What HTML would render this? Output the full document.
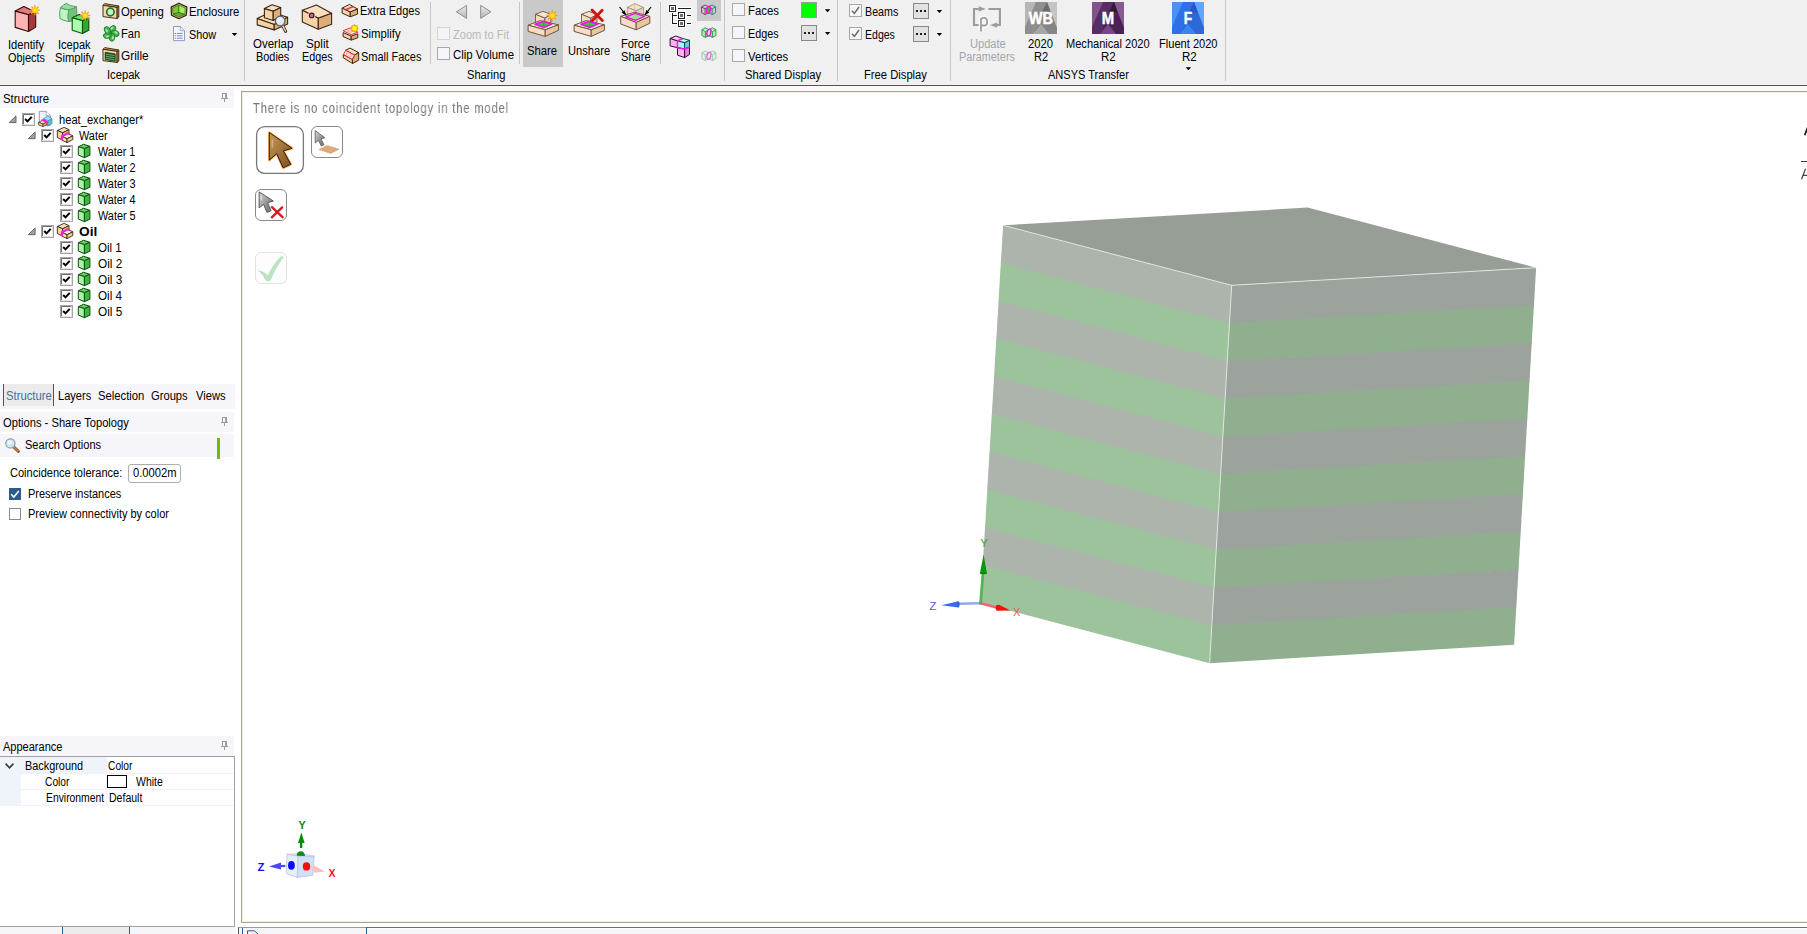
<!DOCTYPE html>
<html><head><meta charset="utf-8"><title>heat_exchanger - SpaceClaim</title>
<style>
html,body{margin:0;padding:0;}
body{width:1807px;height:934px;overflow:hidden;position:relative;background:#fff;
 font-family:"Liberation Sans",sans-serif;font-size:12px;line-height:14px;color:#000;}
.t{position:absolute;white-space:nowrap;transform-origin:0 0;line-height:14px;}
.b{position:absolute;}
svg{position:absolute;left:0;top:0;overflow:visible;}
</style></head><body>
<!-- ===== ribbon background ===== -->
<div class="b" style="left:0;top:0;width:1807px;height:84px;background:#f0f0f0"></div>
<div class="b" style="left:0;top:84px;width:1807px;height:1px;background:#f6f1ea"></div>
<div class="b" style="left:0;top:85px;width:1807px;height:1px;background:#2b5c8c"></div>
<div class="b" style="left:0;top:86px;width:1807px;height:5px;background:#fbfbfd"></div>
<!-- share highlight -->
<div class="b" style="left:523px;top:0;width:40px;height:67px;background:#c9c9c9"></div>
<div class="b" style="left:697px;top:0;width:24px;height:21px;background:#c9c9c9"></div>
<!-- group separators -->
<div class="b" style="left:244px;top:0;width:1px;height:81px;background:#c6c6c6"></div>
<div class="b" style="left:430px;top:2px;width:1px;height:62px;background:#c6c6c6"></div>
<div class="b" style="left:519px;top:2px;width:1px;height:62px;background:#c6c6c6"></div>
<div class="b" style="left:660px;top:2px;width:1px;height:62px;background:#c6c6c6"></div>
<div class="b" style="left:724px;top:0;width:1px;height:81px;background:#c6c6c6"></div>
<div class="b" style="left:837px;top:0;width:1px;height:81px;background:#c6c6c6"></div>
<div class="b" style="left:950px;top:0;width:1px;height:81px;background:#c6c6c6"></div>
<div class="b" style="left:1225px;top:0;width:1px;height:81px;background:#c6c6c6"></div>
<!-- ===== left panels ===== -->
<div class="b" style="left:0;top:88px;width:234px;height:20px;background:#f5f5fa"></div>
<div class="b" style="left:0;top:384px;width:235px;height:25px;background:#f5f5fa"></div>
<div class="b" style="left:3px;top:384px;width:51px;height:22px;background:#ebebeb;border-left:1px solid #2b5c8c;border-right:1px solid #2b5c8c;box-sizing:border-box"></div>
<div class="b" style="left:0;top:412px;width:234px;height:20px;background:#f5f5fa"></div>
<div class="b" style="left:0;top:434px;width:234px;height:23px;background:#f5f5fa"></div>
<div class="b" style="left:217px;top:438px;width:3px;height:21px;background:#76b900"></div>
<div class="b" style="left:128px;top:464px;width:53px;height:19px;background:#fff;border:1px solid #adadad;border-radius:3px;box-sizing:border-box"></div>
<div class="b" style="left:9px;top:488px;width:12px;height:12px;background:#2b5c8c"></div>
<div class="b" style="left:9px;top:508px;width:12px;height:12px;background:#fff;border:1px solid #8c8c8c;box-sizing:border-box"></div>
<div class="b" style="left:0;top:736px;width:234px;height:20px;background:#f5f5fa"></div>
<!-- appearance grid -->
<div class="b" style="left:0;top:756px;width:235px;height:171px;border-top:1px solid #a0a0a0;border-right:1px solid #a0a0a0;border-bottom:1px solid #a0a0a0;box-sizing:border-box;background:#fff"></div>
<div class="b" style="left:0;top:757px;width:106px;height:16px;background:#eff3fa"></div>
<div class="b" style="left:0;top:773px;width:21px;height:32px;background:#eff3fa"></div>
<div class="b" style="left:21px;top:773px;width:213px;height:1px;background:#eef1f7"></div>
<div class="b" style="left:21px;top:789px;width:213px;height:1px;background:#eef1f7"></div>
<div class="b" style="left:0px;top:805px;width:234px;height:1px;background:#eef1f7"></div>
<div class="b" style="left:106px;top:757px;width:1px;height:48px;background:#eef1f7"></div>
<div class="b" style="left:107px;top:775px;width:20px;height:13px;border:1px solid #000;box-sizing:border-box;background:#fff"></div>
<!-- bottom strip left -->
<div class="b" style="left:0;top:927px;width:236px;height:7px;background:#f5f5fa"></div>
<div class="b" style="left:62px;top:927px;width:68px;height:7px;background:#ebebeb;border-left:1px solid #2b5c8c;border-right:1px solid #2b5c8c;box-sizing:border-box"></div>
<!-- ===== viewport frame ===== -->
<div class="b" style="left:241px;top:91px;width:1600px;height:832px;border:1px solid #a9a592;box-sizing:border-box;background:#fff"></div>
<div class="b" style="left:242px;top:92px;width:1600px;height:830px;border:1px solid #f4efd9;box-sizing:border-box;"></div>
<!-- bottom strip right -->
<div class="b" style="left:238px;top:927px;width:1569px;height:7px;background:#f5f5fa;border-top:1px solid #9c9c9c;border-left:1px solid #505050;box-sizing:border-box"></div>
<div class="b" style="left:367px;top:927px;width:1440px;height:1px;background:#707070"></div>
<div class="b" style="left:367px;top:928px;width:1440px;height:1px;background:#fdfdfe"></div>
<div class="b" style="left:242px;top:928px;width:1px;height:6px;background:#2b5c8c"></div>
<div class="b" style="left:366px;top:927px;width:1px;height:7px;background:#2b5c8c"></div>

<svg width="1807" height="86" viewBox="0 0 1807 86">
<polygon points="15.2,11.1 23.8,6.6 35.7,11.9 28.5,14.7" fill="#e27a7a" stroke="#3a0a0a" stroke-width="1.1" stroke-linejoin="round"/>
<polygon points="15.2,11.1 28.5,14.7 28.5,31.5 15.2,27.4" fill="#ffb4b4" stroke="#3a0a0a" stroke-width="1.1" stroke-linejoin="round"/>
<polygon points="28.5,14.7 35.7,11.9 35.7,27.1 28.5,31.5" fill="#a63a3a" stroke="#3a0a0a" stroke-width="1.1" stroke-linejoin="round"/>
<line x1="30.4" y1="10.2" x2="39.6" y2="10.2" stroke="#f39a2c" stroke-width="1.3" stroke-linecap="round"/>
<line x1="31.7" y1="6.9" x2="38.3" y2="13.5" stroke="#f39a2c" stroke-width="1.3" stroke-linecap="round"/>
<line x1="35.0" y1="5.6" x2="35.0" y2="14.8" stroke="#f39a2c" stroke-width="1.3" stroke-linecap="round"/>
<line x1="38.3" y1="6.9" x2="31.7" y2="13.5" stroke="#f39a2c" stroke-width="1.3" stroke-linecap="round"/>
<circle cx="35.0" cy="10.2" r="2.9" fill="#ffc21a"/>
<circle cx="35.0" cy="10.2" r="1.8" fill="#ffe800"/>
<path d="M60.5,7.6 Q59,13 60,18.6 Q64,20.8 68.6,21.6 Q67.4,15 68.8,9.8 Q64,9.4 60.5,7.6Z" fill="#bdf5c0" stroke="#5c9c6c" stroke-width="1"/>
<path d="M68.8,9.8 Q73,8.8 76.4,6.8 Q77.4,13 76.4,19.4 Q72.5,21 68.6,21.6 Q67.4,15 68.8,9.8Z" fill="#72c47c" stroke="#5c9c6c" stroke-width="1"/>
<path d="M60.5,7.6 Q63.4,4.6 66.6,3.4 Q69,6 76.4,6.8 Q73,8.8 68.8,9.8 Q64,9.4 60.5,7.6Z" fill="#8fe29a" stroke="#5c9c6c" stroke-width="1"/>
<polygon points="72.2,17.7 79.1,14.4 88.8,18.3 82.5,20.8" fill="#66e066" stroke="#0c500c" stroke-width="1.1" stroke-linejoin="round"/>
<polygon points="72.2,17.7 82.5,20.8 82.5,33.5 72.2,30.2" fill="#aaffaa" stroke="#0c500c" stroke-width="1.1" stroke-linejoin="round"/>
<polygon points="82.5,20.8 88.8,18.3 88.8,30.2 82.5,33.5" fill="#34a834" stroke="#0c500c" stroke-width="1.1" stroke-linejoin="round"/>
<line x1="80.6" y1="15.5" x2="89.8" y2="15.5" stroke="#f39a2c" stroke-width="1.3" stroke-linecap="round"/>
<line x1="81.9" y1="12.2" x2="88.5" y2="18.8" stroke="#f39a2c" stroke-width="1.3" stroke-linecap="round"/>
<line x1="85.2" y1="10.9" x2="85.2" y2="20.1" stroke="#f39a2c" stroke-width="1.3" stroke-linecap="round"/>
<line x1="88.5" y1="12.2" x2="81.9" y2="18.8" stroke="#f39a2c" stroke-width="1.3" stroke-linecap="round"/>
<circle cx="85.2" cy="15.5" r="2.9" fill="#ffc21a"/>
<circle cx="85.2" cy="15.5" r="1.8" fill="#ffe800"/>
<polygon points="103.0,5.3 104.7,3.6 118.8,6.0 117.1,7.4" fill="#d8aa74" stroke="#3c260e" stroke-width="0.95" stroke-linejoin="round"/>
<polygon points="103.0,5.3 117.1,7.4 117.1,18.5 103.0,16.6" fill="#f9d6ab" stroke="#3c260e" stroke-width="0.95" stroke-linejoin="round"/>
<polygon points="117.1,7.4 118.8,6.0 118.8,17.0 117.1,18.5" fill="#b98a58" stroke="#3c260e" stroke-width="0.95" stroke-linejoin="round"/>
<ellipse cx="110.4" cy="12" rx="3.7" ry="3.9" fill="#cfeccf" stroke="#1d7a22" stroke-width="1.7"/>
<polygon points="103.0,49.3 104.7,47.6 118.8,50.0 117.1,51.4" fill="#d8aa74" stroke="#3c260e" stroke-width="0.95" stroke-linejoin="round"/>
<polygon points="103.0,49.3 117.1,51.4 117.1,62.5 103.0,60.6" fill="#f9d6ab" stroke="#3c260e" stroke-width="0.95" stroke-linejoin="round"/>
<polygon points="117.1,51.4 118.8,50.0 118.8,61.0 117.1,62.5" fill="#b98a58" stroke="#3c260e" stroke-width="0.95" stroke-linejoin="round"/>
<polygon points="105.2,52.3 115.2,53.9 115.2,61.2 105.2,59.6" fill="#0e5a22" stroke="#0a3c14" stroke-width="0.8" stroke-linejoin="round"/>
<line x1="106.0" y1="54.2" x2="114.6" y2="55.6" stroke="#78b278" stroke-width="0.9"/>
<line x1="106.0" y1="56.3" x2="114.6" y2="57.7" stroke="#78b278" stroke-width="0.9"/>
<line x1="106.0" y1="58.4" x2="114.6" y2="59.8" stroke="#78b278" stroke-width="0.9"/>
<ellipse cx="112.4" cy="29.0" rx="3.9" ry="2.7" transform="rotate(-45 112.4 29.0)" fill="#46b84e" stroke="#1f7a2a" stroke-width="0.9"/>
<ellipse cx="111.9" cy="28.2" rx="1.7" ry="1.0" transform="rotate(-45 111.9 28.2)" fill="#a6e6a8"/>
<ellipse cx="115.3" cy="33.3" rx="3.9" ry="2.7" transform="rotate(27 115.3 33.3)" fill="#46b84e" stroke="#1f7a2a" stroke-width="0.9"/>
<ellipse cx="115.9" cy="32.6" rx="1.7" ry="1.0" transform="rotate(27 115.9 32.6)" fill="#a6e6a8"/>
<ellipse cx="112.1" cy="37.3" rx="3.9" ry="2.7" transform="rotate(99 112.1 37.3)" fill="#46b84e" stroke="#1f7a2a" stroke-width="0.9"/>
<ellipse cx="112.9" cy="37.7" rx="1.7" ry="1.0" transform="rotate(99 112.9 37.7)" fill="#a6e6a8"/>
<ellipse cx="107.3" cy="35.6" rx="3.9" ry="2.7" transform="rotate(171 107.3 35.6)" fill="#46b84e" stroke="#1f7a2a" stroke-width="0.9"/>
<ellipse cx="107.2" cy="36.4" rx="1.7" ry="1.0" transform="rotate(171 107.2 36.4)" fill="#a6e6a8"/>
<ellipse cx="107.4" cy="30.4" rx="3.9" ry="2.7" transform="rotate(243 107.4 30.4)" fill="#46b84e" stroke="#1f7a2a" stroke-width="0.9"/>
<ellipse cx="106.6" cy="30.6" rx="1.7" ry="1.0" transform="rotate(243 106.6 30.6)" fill="#a6e6a8"/>
<circle cx="110.9" cy="33.1" r="1.5" fill="#1f8a2a"/>
<polygon points="178.9,3.2 186.9,7.1 186.3,15.2 178.9,18.7 171.5,15.2 171.1,7.1" fill="#e6bc8c" stroke="#35200a" stroke-width="1.2" stroke-linejoin="round"/>
<polygon points="172.7,8.0 178.9,5.1 178.9,12.6 173.0,14.4" fill="#7cc634" stroke="#2c6a10" stroke-width="0.7" stroke-linejoin="round"/>
<polygon points="178.9,5.1 185.2,8.0 184.9,14.4 178.9,12.6" fill="#a6f254" stroke="#2c6a10" stroke-width="0.7" stroke-linejoin="round"/>
<polygon points="173.0,14.4 178.9,12.6 184.9,14.4 178.9,17.1" fill="#5eb02e" stroke="#2c6a10" stroke-width="0.7" stroke-linejoin="round"/>
<path d="M173.5,26.5 H180.3 L184.5,30.7 V40.6 H173.5Z" fill="#f7f7fb" stroke="#8d9cc9" stroke-width="1"/>
<path d="M180.3,26.5 V30.7 H184.5" fill="#e4e8f4" stroke="#8d9cc9" stroke-width="0.8"/>
<line x1="176.8" y1="33.4" x2="182.6" y2="33.4" stroke="#6c7cb4" stroke-width="0.9"/>
<rect x="174.8" y="32.9" width="1.0" height="1.0" fill="#b83a3a"/>
<line x1="176.8" y1="35.8" x2="182.6" y2="35.8" stroke="#6c7cb4" stroke-width="0.9"/>
<rect x="174.8" y="35.3" width="1.0" height="1.0" fill="#3a9a3a"/>
<line x1="176.8" y1="38.2" x2="182.6" y2="38.2" stroke="#6c7cb4" stroke-width="0.9"/>
<rect x="174.8" y="37.7" width="1.0" height="1.0" fill="#3a9a3a"/>
<polygon points="231.7,33.0 237.3,33.0 234.5,36.1" fill="#000"/>
<polygon points="257.2,18.5 270.5,12.0 287.6,17.2 274.2,24.6" fill="#fbdfbd" stroke="#3c2612" stroke-width="1.1" stroke-linejoin="round"/>
<polygon points="257.2,18.5 274.2,24.6 274.2,29.9 257.2,24.9" fill="#f6d2a8" stroke="#3c2612" stroke-width="1.1" stroke-linejoin="round"/>
<polygon points="274.2,24.6 287.6,17.2 287.6,24.0 274.2,29.9" fill="#dcae7c" stroke="#3c2612" stroke-width="1.1" stroke-linejoin="round"/>
<polygon points="264.4,8.6 272.1,4.7 280.7,7.5 273.2,11.3" fill="#fbdfbd" stroke="#3c2612" stroke-width="1.1" stroke-linejoin="round"/>
<polygon points="264.4,8.6 273.2,11.3 273.2,20.5 264.4,17.7" fill="#f6d2a8" stroke="#3c2612" stroke-width="1.1" stroke-linejoin="round"/>
<polygon points="273.2,11.3 280.7,7.5 280.7,16.0 273.2,20.5" fill="#dcae7c" stroke="#3c2612" stroke-width="1.1" stroke-linejoin="round"/>
<line x1="282.6" y1="25.2" x2="285.6" y2="31.4" stroke="#4a3018" stroke-width="3.2" stroke-linecap="round"/>
<line x1="282.8" y1="25.6" x2="285.4" y2="31.0" stroke="#f2dcc0" stroke-width="1.4" stroke-linecap="round"/>
<circle cx="280.2" cy="21" r="4.8" fill="#dde8f0" stroke="#586068" stroke-width="1.3"/>
<circle cx="279.2" cy="19.8" r="2.4" fill="#f4f8fb" opacity="0.8"/>
<polygon points="302.3,10.2 316.4,5.0 331.6,13.3 318.3,18.3" fill="#fbdfbd" stroke="#3c2612" stroke-width="1.1" stroke-linejoin="round"/>
<polygon points="302.3,10.2 318.3,18.3 318.3,29.3 302.3,22.1" fill="#f6d2a8" stroke="#3c2612" stroke-width="1.1" stroke-linejoin="round"/>
<polygon points="318.3,18.3 331.6,13.3 331.6,24.3 318.3,29.3" fill="#dcae7c" stroke="#3c2612" stroke-width="1.1" stroke-linejoin="round"/>
<circle cx="311.7" cy="15.4" r="3.7" fill="#f8d2da"/>
<circle cx="311.7" cy="15.4" r="2.3" fill="#c8747a" stroke="#40141c" stroke-width="1.1"/>
<polygon points="342.1,8.1 349.5,4.4 357.5,9.0 350.2,12.0" fill="#fbdfbd" stroke="#3c2612" stroke-width="1" stroke-linejoin="round"/>
<polygon points="342.1,8.1 350.2,12.0 350.2,16.8 342.1,13.1" fill="#f6d2a8" stroke="#3c2612" stroke-width="1" stroke-linejoin="round"/>
<polygon points="350.2,12.0 357.5,9.0 357.5,14.1 350.2,16.8" fill="#dcae7c" stroke="#3c2612" stroke-width="1" stroke-linejoin="round"/>
<line x1="346.0" y1="9.4" x2="353.6" y2="6.6" stroke="#f03048" stroke-width="1.6"/>
<polygon points="343.1,32.6 351.2,36.1 351.2,40.1 343.1,36.6" fill="#f6d2a8" stroke="#3c2612" stroke-width="1" stroke-linejoin="round"/>
<polygon points="351.2,36.1 357.8,33.8 357.8,37.8 351.2,40.1" fill="#dcae7c" stroke="#3c2612" stroke-width="1" stroke-linejoin="round"/>
<polygon points="343.1,30.7 350.5,27.9 357.8,32.1 351.2,34.7" fill="#fffafa" stroke="#f6222c" stroke-width="1.0" stroke-linejoin="round"/>
<polygon points="346.6,30.9 350.4,29.5 353.4,31.3 350.6,32.7" fill="#fbd0d4" stroke="#f8969c" stroke-width="0.7" stroke-linejoin="round"/>
<rect x="351.4" y="25.3" width="6.2" height="6.2" fill="#f4a21e"/>
<rect x="351.4" y="25.3" width="6.2" height="6.2" fill="#f4a21e" transform="rotate(45 354.5 28.4)"/>
<circle cx="354.5" cy="28.4" r="2.4" fill="#ffff00"/>
<polygon points="345.5,50.3 350.0,48.1 358.7,52.6 354.7,55.0" fill="#fbdfbd" stroke="#3c2612" stroke-width="1" stroke-linejoin="round"/>
<polygon points="354.7,55.0 358.7,52.6 358.7,60.2 352.6,63.5 352.3,59.6" fill="#dcae7c" stroke="#3c2612" stroke-width="1" stroke-linejoin="round"/>
<polygon points="343.3,54.5 352.3,59.6 352.6,63.5 343.3,57.8" fill="#f6d2a8" stroke="#3c2612" stroke-width="1" stroke-linejoin="round"/>
<polygon points="343.5,54.4 345.7,50.5 354.5,55.1 352.2,59.3" fill="#fff8f6" stroke="#f42630" stroke-width="1.0" stroke-linejoin="round"/>
<polygon points="346.1,54.1 347.0,52.5 351.9,55.3 350.9,57.0" fill="none" stroke="#f6727a" stroke-width="0.6" stroke-linejoin="round"/>
<defs><linearGradient id="ga" x1="0" y1="0" x2="0" y2="1"><stop offset="0" stop-color="#ececec"/><stop offset="1" stop-color="#b4b4b4"/></linearGradient></defs>
<polygon points="466.6,5.4 466.6,18.4 456.4,11.8" fill="url(#ga)" stroke="#8e8e8e" stroke-width="1" stroke-linejoin="round"/>
<polygon points="480.7,5.4 480.7,18.4 490.9,11.8" fill="url(#ga)" stroke="#8e8e8e" stroke-width="1" stroke-linejoin="round"/>
<rect x="437.5" y="27.5" width="12.0" height="12.0" fill="#f4f4f8" stroke="#d4d4d4" stroke-width="1"/>
<rect x="437.5" y="47.5" width="12.0" height="12.0" fill="#f6f6fa" stroke="#a8a8a8" stroke-width="1"/>
<rect x="732.5" y="3.5" width="12.0" height="12.0" fill="#f6f6fa" stroke="#a8a8a8" stroke-width="1"/>
<rect x="732.5" y="26.5" width="12.0" height="12.0" fill="#f6f6fa" stroke="#a8a8a8" stroke-width="1"/>
<rect x="732.5" y="49.5" width="12.0" height="12.0" fill="#f6f6fa" stroke="#a8a8a8" stroke-width="1"/>
<rect x="849.5" y="4.5" width="12.0" height="12.0" fill="#f6f6fa" stroke="#a8a8a8" stroke-width="1"/>
<path d="M852.0,10.8 l2.4,2.6 l4.6,-6.4" fill="none" stroke="#686868" stroke-width="1.5"/>
<rect x="849.5" y="27.5" width="12.0" height="12.0" fill="#f6f6fa" stroke="#a8a8a8" stroke-width="1"/>
<path d="M852.0,33.8 l2.4,2.6 l4.6,-6.4" fill="none" stroke="#686868" stroke-width="1.5"/>
<polygon points="535.5,14.3 542.9,11.4 551.0,14.3 544.8,18.2" fill="#f6e4d0" stroke="#6e5640" stroke-width="0.9" stroke-linejoin="round"/>
<polygon points="535.5,14.3 544.8,18.2 544.8,25.0 535.5,22.0" fill="#f3dcc4" stroke="#6e5640" stroke-width="0.9" stroke-linejoin="round"/>
<polygon points="544.8,18.2 551.0,14.3 551.0,22.0 544.8,25.0" fill="#e6caaa" stroke="#6e5640" stroke-width="0.9" stroke-linejoin="round"/>
<polygon points="528.1,25.2 540.2,20.6 558.4,24.8 545.2,29.8" fill="#fdebd6" stroke="#6e5640" stroke-width="1" stroke-linejoin="round"/>
<polygon points="528.1,25.2 545.2,29.8 545.2,36.4 528.1,31.4" fill="#f8ddc2" stroke="#6e5640" stroke-width="1" stroke-linejoin="round"/>
<polygon points="545.2,29.8 558.4,24.8 558.4,30.4 545.2,36.4" fill="#e8c6a2" stroke="#6e5640" stroke-width="1" stroke-linejoin="round"/>
<polygon points="535.1,24.4 543.2,21.3 551.8,24.0 544.0,27.5" fill="#3cc43c" stroke="#f010f0" stroke-width="1.7" stroke-linejoin="round"/>
<line x1="543.6" y1="21.8" x2="543.8" y2="26.8" stroke="#2aa02a" stroke-width="0.7"/>
<line x1="547.2" y1="15.5" x2="557.2" y2="15.5" stroke="#f39a2c" stroke-width="1.3" stroke-linecap="round"/>
<line x1="548.7" y1="12.0" x2="555.7" y2="19.0" stroke="#f39a2c" stroke-width="1.3" stroke-linecap="round"/>
<line x1="552.2" y1="10.5" x2="552.2" y2="20.5" stroke="#f39a2c" stroke-width="1.3" stroke-linecap="round"/>
<line x1="555.7" y1="12.0" x2="548.7" y2="19.0" stroke="#f39a2c" stroke-width="1.3" stroke-linecap="round"/>
<circle cx="552.2" cy="15.5" r="3.1" fill="#ffc21a"/>
<circle cx="552.2" cy="15.5" r="2.0" fill="#ffe800"/>
<polygon points="581.5,14.3 588.9,11.4 597.0,14.3 590.8,18.2" fill="#f6e4d0" stroke="#6e5640" stroke-width="0.9" stroke-linejoin="round"/>
<polygon points="581.5,14.3 590.8,18.2 590.8,25.0 581.5,22.0" fill="#f3dcc4" stroke="#6e5640" stroke-width="0.9" stroke-linejoin="round"/>
<polygon points="590.8,18.2 597.0,14.3 597.0,22.0 590.8,25.0" fill="#e6caaa" stroke="#6e5640" stroke-width="0.9" stroke-linejoin="round"/>
<polygon points="574.1,25.2 586.2,20.6 604.4,24.8 591.2,29.8" fill="#fdebd6" stroke="#6e5640" stroke-width="1" stroke-linejoin="round"/>
<polygon points="574.1,25.2 591.2,29.8 591.2,36.4 574.1,31.4" fill="#f8ddc2" stroke="#6e5640" stroke-width="1" stroke-linejoin="round"/>
<polygon points="591.2,29.8 604.4,24.8 604.4,30.4 591.2,36.4" fill="#e8c6a2" stroke="#6e5640" stroke-width="1" stroke-linejoin="round"/>
<polygon points="581.1,24.4 589.2,21.3 597.8,24.0 590.0,27.5" fill="#3cc43c" stroke="#f010f0" stroke-width="1.7" stroke-linejoin="round"/>
<line x1="589.6" y1="21.8" x2="589.8" y2="26.8" stroke="#2aa02a" stroke-width="0.7"/>
<line x1="592.0" y1="10.0" x2="602.4" y2="20.6" stroke="#d01414" stroke-width="2.8" stroke-linecap="round"/>
<line x1="602.2" y1="10.2" x2="592.2" y2="20.8" stroke="#d01414" stroke-width="2.8" stroke-linecap="round"/>
<polygon points="627.3,7.4 634.7,3.6 643.6,7.4 636.0,10.8" fill="#f3e2d0" stroke="#a08a74" stroke-width="0.8" stroke-linejoin="round"/>
<polygon points="627.3,7.4 636.0,10.8 636.0,18.5 627.3,15.0" fill="#f1dcc6" stroke="#a08a74" stroke-width="0.8" stroke-linejoin="round"/>
<polygon points="636.0,10.8 643.6,7.4 643.6,15.0 636.0,18.5" fill="#e8d0b6" stroke="#a08a74" stroke-width="0.8" stroke-linejoin="round"/>
<line x1="634.7" y1="3.6" x2="634.7" y2="12.5" stroke="#c8b49c" stroke-width="0.7"/>
<polygon points="620.7,16.3 634.7,12.3 649.8,16.3 636.2,22.5" fill="#fdebd6" stroke="#6e5640" stroke-width="1" stroke-linejoin="round"/>
<polygon points="620.7,16.3 636.2,22.5 636.2,29.8 620.7,24.0" fill="#f8ddc2" stroke="#6e5640" stroke-width="1" stroke-linejoin="round"/>
<polygon points="636.2,22.5 649.8,16.3 649.8,23.2 636.2,29.8" fill="#e8c6a2" stroke="#6e5640" stroke-width="1" stroke-linejoin="round"/>
<polygon points="625.8,17.0 634.9,13.4 644.6,16.4 635.6,20.4" fill="#a4dc90" stroke="#f010f0" stroke-width="1.5" stroke-linejoin="round"/>
<line x1="619.6" y1="7.0" x2="626.2" y2="15.4" stroke="#000" stroke-width="1.2"/>
<polygon points="626.2,15.4 621.6,12.6 624.6,10.3" fill="#000"/>
<line x1="651.0" y1="7.0" x2="644.8" y2="15.2" stroke="#000" stroke-width="1.2"/>
<polygon points="644.8,15.2 646.3,10.1 649.3,12.4" fill="#000"/>
<rect x="671.0" y="11.0" width="3.0" height="14.0" fill="#fff"/>
<rect x="671.0" y="14.0" width="8.0" height="3.0" fill="#fff"/>
<rect x="671.0" y="22.0" width="8.0" height="3.0" fill="#fff"/>
<rect x="677.0" y="7.0" width="15.0" height="3.0" fill="#fff"/>
<rect x="686.0" y="14.0" width="6.0" height="3.0" fill="#fff"/>
<rect x="686.0" y="22.0" width="6.0" height="3.0" fill="#fff"/>
<rect x="672.0" y="12.0" width="1.0" height="12.0" fill="#1c1c1c"/>
<rect x="672.0" y="15.0" width="6.0" height="1.0" fill="#1c1c1c"/>
<rect x="672.0" y="23.0" width="6.0" height="1.0" fill="#1c1c1c"/>
<rect x="678.0" y="8.0" width="13.0" height="1.0" fill="#1c1c1c"/>
<rect x="687.0" y="15.0" width="4.0" height="1.0" fill="#1c1c1c"/>
<rect x="687.0" y="23.0" width="4.0" height="1.0" fill="#1c1c1c"/>
<rect x="668.0" y="4.0" width="9.0" height="9.0" fill="#fff"/>
<rect x="669.0" y="5.0" width="7.0" height="7.0" fill="#1c1c1c"/>
<rect x="670.0" y="6.0" width="5.0" height="5.0" fill="#fff"/>
<rect x="671.0" y="7.0" width="3.0" height="3.0" fill="#6c6c6c"/>
<rect x="677.0" y="11.0" width="9.0" height="9.0" fill="#fff"/>
<rect x="678.0" y="12.0" width="7.0" height="7.0" fill="#1c1c1c"/>
<rect x="679.0" y="13.0" width="5.0" height="5.0" fill="#fff"/>
<rect x="680.0" y="14.0" width="3.0" height="3.0" fill="#6c6c6c"/>
<rect x="677.0" y="19.0" width="9.0" height="9.0" fill="#fff"/>
<rect x="678.0" y="20.0" width="7.0" height="7.0" fill="#1c1c1c"/>
<rect x="679.0" y="21.0" width="5.0" height="5.0" fill="#fff"/>
<rect x="680.0" y="22.0" width="3.0" height="3.0" fill="#6c6c6c"/>
<polygon points="670.1,38.5 675.8,36.0 682.8,38.5 677.5,41.0" fill="#ffc6f6" stroke="#34063a" stroke-width="1" stroke-linejoin="round"/>
<polygon points="670.1,38.5 677.5,41.0 677.5,47.7 670.1,45.9" fill="#ffb2f2" stroke="#34063a" stroke-width="1" stroke-linejoin="round"/>
<polygon points="677.5,41.0 682.8,38.5 689.5,40.3 684.6,42.7" fill="#c4ffff" stroke="#0c4a4a" stroke-width="1" stroke-linejoin="round"/>
<polygon points="677.5,41.0 684.6,42.7 684.6,49.1 677.5,47.7" fill="#a2fafa" stroke="#0c4a4a" stroke-width="1" stroke-linejoin="round"/>
<polygon points="684.6,42.7 689.5,40.3 689.5,47.0 684.6,49.1" fill="#62d2d2" stroke="#0c4a4a" stroke-width="1" stroke-linejoin="round"/>
<polygon points="677.5,47.7 684.6,49.1 684.6,57.6 677.5,55.1" fill="#ffb2f2" stroke="#34063a" stroke-width="1" stroke-linejoin="round"/>
<polygon points="684.6,49.1 689.5,47.0 689.5,54.4 684.6,57.6" fill="#e482d6" stroke="#34063a" stroke-width="1" stroke-linejoin="round"/>
<path d="M682.8,38.5 L677.5,41 V47.7 L684.6,49.1 L689.5,47" fill="none" stroke="#f418e4" stroke-width="1.5" stroke-linejoin="round"/>
<g opacity="1.00" fill="none" stroke-width="0.9">
<path d="M701.6,6.9 l3.5,-1.9 l3.5,1.9 v5.8 l-3.5,1.9 l-3.5,-1.9Z M701.6,6.9 l3.5,1.9 l3.5,-1.9 M705.1,8.8 v5.8" stroke="#7a2a7a"/>
<path d="M708.6,6.9 l3.5,-1.9 l3.5,1.9 v5.8 l-3.5,1.9 l-3.5,-1.9Z M708.6,6.9 l3.5,1.9 l3.5,-1.9 M712.1,8.8 v5.8" stroke="#2a7a7a"/>
<ellipse cx="708.6" cy="9.8" rx="1.9" ry="3.6" transform="rotate(14 708.6 9.8)" fill="#20d020" stroke="#f018e0" stroke-width="1.3"/>
</g>
<g opacity="1.00" fill="none" stroke-width="0.9">
<path d="M701.9,29.7 l3.5,-1.9 l3.5,1.9 v5.8 l-3.5,1.9 l-3.5,-1.9Z M701.9,29.7 l3.5,1.9 l3.5,-1.9 M705.4,31.6 v5.8" stroke="#1c9a2c" fill="#b6e8b6"/>
<path d="M708.9,29.7 l3.5,-1.9 l3.5,1.9 v5.8 l-3.5,1.9 l-3.5,-1.9Z M708.9,29.7 l3.5,1.9 l3.5,-1.9 M712.4,31.6 v5.8" stroke="#1c9a2c" fill="#b6e8b6"/>
<ellipse cx="708.9" cy="32.6" rx="1.9" ry="3.6" transform="rotate(14 708.9 32.6)" fill="#c8f0c8" stroke="#e018d8" stroke-width="1.3"/>
</g>
<g opacity="0.62" fill="none" stroke-width="0.9">
<path d="M701.9,52.9 l3.5,-1.9 l3.5,1.9 v5.8 l-3.5,1.9 l-3.5,-1.9Z M701.9,52.9 l3.5,1.9 l3.5,-1.9 M705.4,54.8 v5.8" stroke="#5cb86a" fill="#d4f0d4"/>
<path d="M708.9,52.9 l3.5,-1.9 l3.5,1.9 v5.8 l-3.5,1.9 l-3.5,-1.9Z M708.9,52.9 l3.5,1.9 l3.5,-1.9 M712.4,54.8 v5.8" stroke="#5cb86a" fill="#d4f0d4"/>
<ellipse cx="708.9" cy="55.8" rx="1.9" ry="3.6" transform="rotate(14 708.9 55.8)" fill="#e4f6e4" stroke="#e018d8" stroke-width="1.3"/>
</g>
<rect x="801.5" y="2.5" width="15.0" height="15.0" fill="#00ff00" stroke="#9a9a9a" stroke-width="1"/>
<rect x="801.5" y="25.5" width="15.0" height="15.0" fill="#e1e1e1" stroke="#888888" stroke-width="1"/>
<rect x="804.0" y="32.0" width="2.0" height="2.0" fill="#1c1c1c"/>
<rect x="808.0" y="32.0" width="2.0" height="2.0" fill="#1c1c1c"/>
<rect x="812.0" y="32.0" width="2.0" height="2.0" fill="#1c1c1c"/>
<rect x="913.5" y="3.5" width="15.0" height="15.0" fill="#e1e1e1" stroke="#888888" stroke-width="1"/>
<rect x="916.0" y="10.0" width="2.0" height="2.0" fill="#1c1c1c"/>
<rect x="920.0" y="10.0" width="2.0" height="2.0" fill="#1c1c1c"/>
<rect x="924.0" y="10.0" width="2.0" height="2.0" fill="#1c1c1c"/>
<rect x="913.5" y="26.5" width="15.0" height="15.0" fill="#e1e1e1" stroke="#888888" stroke-width="1"/>
<rect x="916.0" y="33.0" width="2.0" height="2.0" fill="#1c1c1c"/>
<rect x="920.0" y="33.0" width="2.0" height="2.0" fill="#1c1c1c"/>
<rect x="924.0" y="33.0" width="2.0" height="2.0" fill="#1c1c1c"/>
<polygon points="824.9,9.2 830.3,9.2 827.6,12.3" fill="#000"/>
<polygon points="824.9,31.9 830.3,31.9 827.6,35.0" fill="#000"/>
<polygon points="936.7,10.0 942.1,10.0 939.4,13.1" fill="#000"/>
<polygon points="936.7,33.0 942.1,33.0 939.4,36.1" fill="#000"/>
<polygon points="1185.7,67.2 1191.1,67.2 1188.4,70.3" fill="#000"/>
<path d="M978.8,9 H974 V25 H978.8 M988.4,9 H999.9 V25 H997" fill="none" stroke="#9c9c9c" stroke-width="2.1"/>
<polygon points="978.6,6.2 985.8,9.0 978.6,11.6" fill="#9c9c9c"/>
<polygon points="997.2,22.4 990.0,25.0 997.2,27.8" fill="#9c9c9c"/>
<path d="M981,18 V31.6 M981,19.2 Q981,17.8 984,17.8 Q987.4,17.8 987.4,21.8 Q987.4,25.8 984,25.8 Q981,25.8 981,24.4" fill="none" stroke="#fafafa" stroke-width="4.4"/>
<path d="M981,18 V31.6 M981,19.6 Q981.4,17.9 984,17.9 Q987.2,17.9 987.2,21.8 Q987.2,25.7 984,25.7 Q981.4,25.7 981,24" fill="none" stroke="#9c9c9c" stroke-width="1.8"/>
<g>
<rect x="1025.0" y="2.0" width="32.0" height="32.0" fill="#b6b6b6"/>
<polygon points="1047.0,2.0 1057.0,2.0 1057.0,28.0" fill="#c4c4c4"/>
<polygon points="1036.0,2.0 1047.0,2.0 1049.0,34.0 1025.0,34.0 1025.0,27.0" fill="#8e8e8e"/>
<polygon points="1042.5,11.0 1047.0,2.0 1057.0,28.0 1057.0,34.0 1034.0,34.0" fill="#858585"/>
<polygon points="1042.5,11.0 1047.0,2.0 1050.5,12.0 1045.0,13.0" fill="#6c6c6c"/>
<polygon points="1041.0,24.0 1049.0,34.0 1033.0,34.0" fill="#a6a6a6"/>
<text x="1041.0" y="24.0" font-family="Liberation Sans, sans-serif" font-weight="bold" font-size="16.5" fill="#fff" stroke="#fff" stroke-width="0.5" text-anchor="middle" textLength="24.3" lengthAdjust="spacingAndGlyphs">WB</text>
</g>
<g>
<rect x="1092.0" y="2.0" width="32.0" height="32.0" fill="#82548e"/>
<polygon points="1114.0,2.0 1124.0,2.0 1124.0,28.0" fill="#865a92"/>
<polygon points="1103.0,2.0 1114.0,2.0 1116.0,34.0 1092.0,34.0 1092.0,27.0" fill="#5a2c64"/>
<polygon points="1109.5,11.0 1114.0,2.0 1124.0,28.0 1124.0,34.0 1101.0,34.0" fill="#4a2252"/>
<polygon points="1109.5,11.0 1114.0,2.0 1117.5,12.0 1112.0,13.0" fill="#36163e"/>
<polygon points="1108.0,24.0 1116.0,34.0 1100.0,34.0" fill="#784684"/>
<text x="1108.0" y="24.0" font-family="Liberation Sans, sans-serif" font-weight="bold" font-size="16.5" fill="#fff" stroke="#fff" stroke-width="0.5" text-anchor="middle" textLength="12.4" lengthAdjust="spacingAndGlyphs">M</text>
</g>
<g>
<rect x="1172.0" y="2.0" width="32.0" height="32.0" fill="#4a92f2"/>
<polygon points="1194.0,2.0 1204.0,2.0 1204.0,28.0" fill="#5aa8ff"/>
<polygon points="1183.0,2.0 1194.0,2.0 1196.0,34.0 1172.0,34.0 1172.0,27.0" fill="#2e70e8"/>
<polygon points="1189.5,11.0 1194.0,2.0 1204.0,28.0 1204.0,34.0 1181.0,34.0" fill="#2c68d6"/>
<polygon points="1189.5,11.0 1194.0,2.0 1197.5,12.0 1192.0,13.0" fill="#2458c2"/>
<polygon points="1188.0,24.0 1196.0,34.0 1180.0,34.0" fill="#3a84ee"/>
<text x="1188.0" y="24.0" font-family="Liberation Sans, sans-serif" font-weight="bold" font-size="16.5" fill="#fff" stroke="#fff" stroke-width="0.5" text-anchor="middle" textLength="8.4" lengthAdjust="spacingAndGlyphs">F</text>
</g>
</svg>

<svg width="1807" height="934" viewBox="0 0 1807 934">
<rect x="222.0" y="93.0" width="5.0" height="1.0" fill="#9c9c9c"/>
<rect x="222.0" y="93.0" width="1.0" height="5.0" fill="#9c9c9c"/>
<rect x="225.0" y="93.0" width="2.0" height="5.0" fill="#9c9c9c"/>
<rect x="221.0" y="98.0" width="7.0" height="1.0" fill="#9c9c9c"/>
<rect x="224.0" y="99.0" width="1.0" height="3.0" fill="#9c9c9c"/>
<rect x="222.0" y="417.0" width="5.0" height="1.0" fill="#9c9c9c"/>
<rect x="222.0" y="417.0" width="1.0" height="5.0" fill="#9c9c9c"/>
<rect x="225.0" y="417.0" width="2.0" height="5.0" fill="#9c9c9c"/>
<rect x="221.0" y="422.0" width="7.0" height="1.0" fill="#9c9c9c"/>
<rect x="224.0" y="423.0" width="1.0" height="3.0" fill="#9c9c9c"/>
<rect x="222.0" y="741.0" width="5.0" height="1.0" fill="#9c9c9c"/>
<rect x="222.0" y="741.0" width="1.0" height="5.0" fill="#9c9c9c"/>
<rect x="225.0" y="741.0" width="2.0" height="5.0" fill="#9c9c9c"/>
<rect x="221.0" y="746.0" width="7.0" height="1.0" fill="#9c9c9c"/>
<rect x="224.0" y="747.0" width="1.0" height="3.0" fill="#9c9c9c"/>
<polygon points="9.2,122.6 16.0,122.6 16.0,115.8" fill="#a2a2a2" stroke="#5e5e5e" stroke-width="0.9" stroke-linejoin="round"/>
<rect x="22.5" y="113.5" width="12.0" height="12.0" fill="#fff" stroke="#a4a4a4" stroke-width="1"/>
<path d="M23.5,124.5 v-10 h10" fill="none" stroke="#6e6e6e" stroke-width="1"/>
<path d="M23.5,124.5 h10 v-10" fill="none" stroke="#e4e4e4" stroke-width="1"/>
<path d="M25.2,119.0 l2.3,2.4 l4.2,-4.6" fill="none" stroke="#000" stroke-width="2"/>
<path d="M39.3,111.3 h6.8 l4.4,4.4 v9.6 h-11.2Z" fill="#f1f1f1" stroke="#8894be" stroke-width="0.9"/>
<path d="M46.1,111.3 v4.4 h4.4" fill="#fff" stroke="#8894be" stroke-width="0.8"/>
<polygon points="43.4,118.8 47.6,116.2 52.0,118.4 48.0,121.0" fill="#a6dff0" stroke="#4a94b4" stroke-width="0.8" stroke-linejoin="round"/>
<polygon points="43.4,118.8 48.0,121.0 48.0,126.0 43.4,123.8" fill="#8ed2e8" stroke="#4a94b4" stroke-width="0.8" stroke-linejoin="round"/>
<polygon points="48.0,121.0 52.0,118.4 52.0,123.6 48.0,126.0" fill="#68b8d4" stroke="#4a94b4" stroke-width="0.8" stroke-linejoin="round"/>
<polygon points="38.3,122.4 42.2,120.6 47.0,122.0 43.0,124.0" fill="#fde0bc" stroke="#5a3c1c" stroke-width="0.8" stroke-linejoin="round"/>
<polygon points="38.3,122.4 43.0,124.0 43.0,126.6 38.3,124.8" fill="#f6d2a8" stroke="#5a3c1c" stroke-width="0.8" stroke-linejoin="round"/>
<polygon points="43.0,124.0 47.0,122.0 47.0,124.6 43.0,126.6" fill="#dcae7c" stroke="#5a3c1c" stroke-width="0.8" stroke-linejoin="round"/>
<path d="M41.6,120.2 Q46.4,119.4 47.4,124.2" fill="none" stroke="#ff18e8" stroke-width="1.8"/>
<polygon points="28.3,138.7 35.1,138.7 35.1,131.9" fill="#a2a2a2" stroke="#5e5e5e" stroke-width="0.9" stroke-linejoin="round"/>
<rect x="41.5" y="129.5" width="12.0" height="12.0" fill="#fff" stroke="#a4a4a4" stroke-width="1"/>
<path d="M42.5,140.5 v-10 h10" fill="none" stroke="#6e6e6e" stroke-width="1"/>
<path d="M42.5,140.5 h10 v-10" fill="none" stroke="#e4e4e4" stroke-width="1"/>
<path d="M44.2,135.0 l2.3,2.4 l4.2,-4.6" fill="none" stroke="#000" stroke-width="2"/>
<polygon points="57.3,130.4 64.0,127.4 69.0,129.6 62.6,132.8" fill="#fbdfbd" stroke="#3c2612" stroke-width="0.9" stroke-linejoin="round"/>
<polygon points="57.3,130.4 62.6,132.8 62.6,140.2 57.3,137.4" fill="#f6d2a8" stroke="#3c2612" stroke-width="0.9" stroke-linejoin="round"/>
<polygon points="62.6,132.8 69.0,129.6 69.0,135.0 62.6,138.0" fill="#dcae7c" stroke="#3c2612" stroke-width="0.9" stroke-linejoin="round"/>
<polygon points="62.0,136.4 67.8,133.6 72.8,135.8 67.0,138.8" fill="#fde6cc" stroke="#3c2612" stroke-width="0.9" stroke-linejoin="round"/>
<polygon points="62.0,136.4 67.0,138.8 67.0,142.6 62.0,140.2" fill="#fbd9c0" stroke="#3c2612" stroke-width="0.9" stroke-linejoin="round"/>
<polygon points="67.0,138.8 72.8,135.8 72.8,139.6 67.0,142.6" fill="#f2c8a4" stroke="#3c2612" stroke-width="0.9" stroke-linejoin="round"/>
<path d="M61.9,140.0 L61.9,136.2 L68.6,133.2" fill="none" stroke="#ff18e8" stroke-width="2" stroke-linejoin="round"/>
<rect x="60.5" y="145.5" width="12.0" height="12.0" fill="#fff" stroke="#a4a4a4" stroke-width="1"/>
<path d="M61.5,156.5 v-10 h10" fill="none" stroke="#6e6e6e" stroke-width="1"/>
<path d="M61.5,156.5 h10 v-10" fill="none" stroke="#e4e4e4" stroke-width="1"/>
<path d="M63.2,151.0 l2.3,2.4 l4.2,-4.6" fill="none" stroke="#000" stroke-width="2"/>
<polygon points="78.3,146.8 83.5,144.3 89.9,146.3 84.4,148.6" fill="#62d462" stroke="#0d4e0d" stroke-width="1" stroke-linejoin="round"/>
<polygon points="78.3,146.8 84.4,148.6 84.4,157.7 78.3,155.0" fill="#aaf2aa" stroke="#0d4e0d" stroke-width="1" stroke-linejoin="round"/>
<polygon points="84.4,148.6 89.9,146.3 89.9,155.3 84.4,157.7" fill="#40b440" stroke="#0d4e0d" stroke-width="1" stroke-linejoin="round"/>
<rect x="60.5" y="161.5" width="12.0" height="12.0" fill="#fff" stroke="#a4a4a4" stroke-width="1"/>
<path d="M61.5,172.5 v-10 h10" fill="none" stroke="#6e6e6e" stroke-width="1"/>
<path d="M61.5,172.5 h10 v-10" fill="none" stroke="#e4e4e4" stroke-width="1"/>
<path d="M63.2,167.0 l2.3,2.4 l4.2,-4.6" fill="none" stroke="#000" stroke-width="2"/>
<polygon points="78.3,162.8 83.5,160.3 89.9,162.3 84.4,164.6" fill="#62d462" stroke="#0d4e0d" stroke-width="1" stroke-linejoin="round"/>
<polygon points="78.3,162.8 84.4,164.6 84.4,173.7 78.3,171.0" fill="#aaf2aa" stroke="#0d4e0d" stroke-width="1" stroke-linejoin="round"/>
<polygon points="84.4,164.6 89.9,162.3 89.9,171.3 84.4,173.7" fill="#40b440" stroke="#0d4e0d" stroke-width="1" stroke-linejoin="round"/>
<rect x="60.5" y="177.5" width="12.0" height="12.0" fill="#fff" stroke="#a4a4a4" stroke-width="1"/>
<path d="M61.5,188.5 v-10 h10" fill="none" stroke="#6e6e6e" stroke-width="1"/>
<path d="M61.5,188.5 h10 v-10" fill="none" stroke="#e4e4e4" stroke-width="1"/>
<path d="M63.2,183.0 l2.3,2.4 l4.2,-4.6" fill="none" stroke="#000" stroke-width="2"/>
<polygon points="78.3,178.8 83.5,176.3 89.9,178.3 84.4,180.6" fill="#62d462" stroke="#0d4e0d" stroke-width="1" stroke-linejoin="round"/>
<polygon points="78.3,178.8 84.4,180.6 84.4,189.7 78.3,187.0" fill="#aaf2aa" stroke="#0d4e0d" stroke-width="1" stroke-linejoin="round"/>
<polygon points="84.4,180.6 89.9,178.3 89.9,187.3 84.4,189.7" fill="#40b440" stroke="#0d4e0d" stroke-width="1" stroke-linejoin="round"/>
<rect x="60.5" y="193.5" width="12.0" height="12.0" fill="#fff" stroke="#a4a4a4" stroke-width="1"/>
<path d="M61.5,204.5 v-10 h10" fill="none" stroke="#6e6e6e" stroke-width="1"/>
<path d="M61.5,204.5 h10 v-10" fill="none" stroke="#e4e4e4" stroke-width="1"/>
<path d="M63.2,199.0 l2.3,2.4 l4.2,-4.6" fill="none" stroke="#000" stroke-width="2"/>
<polygon points="78.3,194.8 83.5,192.3 89.9,194.3 84.4,196.6" fill="#62d462" stroke="#0d4e0d" stroke-width="1" stroke-linejoin="round"/>
<polygon points="78.3,194.8 84.4,196.6 84.4,205.7 78.3,203.0" fill="#aaf2aa" stroke="#0d4e0d" stroke-width="1" stroke-linejoin="round"/>
<polygon points="84.4,196.6 89.9,194.3 89.9,203.3 84.4,205.7" fill="#40b440" stroke="#0d4e0d" stroke-width="1" stroke-linejoin="round"/>
<rect x="60.5" y="209.5" width="12.0" height="12.0" fill="#fff" stroke="#a4a4a4" stroke-width="1"/>
<path d="M61.5,220.5 v-10 h10" fill="none" stroke="#6e6e6e" stroke-width="1"/>
<path d="M61.5,220.5 h10 v-10" fill="none" stroke="#e4e4e4" stroke-width="1"/>
<path d="M63.2,215.0 l2.3,2.4 l4.2,-4.6" fill="none" stroke="#000" stroke-width="2"/>
<polygon points="78.3,210.8 83.5,208.3 89.9,210.3 84.4,212.6" fill="#62d462" stroke="#0d4e0d" stroke-width="1" stroke-linejoin="round"/>
<polygon points="78.3,210.8 84.4,212.6 84.4,221.7 78.3,219.0" fill="#aaf2aa" stroke="#0d4e0d" stroke-width="1" stroke-linejoin="round"/>
<polygon points="84.4,212.6 89.9,210.3 89.9,219.3 84.4,221.7" fill="#40b440" stroke="#0d4e0d" stroke-width="1" stroke-linejoin="round"/>
<polygon points="28.3,234.7 35.1,234.7 35.1,227.9" fill="#a2a2a2" stroke="#5e5e5e" stroke-width="0.9" stroke-linejoin="round"/>
<rect x="41.5" y="225.5" width="12.0" height="12.0" fill="#fff" stroke="#a4a4a4" stroke-width="1"/>
<path d="M42.5,236.5 v-10 h10" fill="none" stroke="#6e6e6e" stroke-width="1"/>
<path d="M42.5,236.5 h10 v-10" fill="none" stroke="#e4e4e4" stroke-width="1"/>
<path d="M44.2,231.0 l2.3,2.4 l4.2,-4.6" fill="none" stroke="#000" stroke-width="2"/>
<polygon points="57.3,226.4 64.0,223.4 69.0,225.6 62.6,228.8" fill="#fbdfbd" stroke="#3c2612" stroke-width="0.9" stroke-linejoin="round"/>
<polygon points="57.3,226.4 62.6,228.8 62.6,236.2 57.3,233.4" fill="#f6d2a8" stroke="#3c2612" stroke-width="0.9" stroke-linejoin="round"/>
<polygon points="62.6,228.8 69.0,225.6 69.0,231.0 62.6,234.0" fill="#dcae7c" stroke="#3c2612" stroke-width="0.9" stroke-linejoin="round"/>
<polygon points="62.0,232.4 67.8,229.6 72.8,231.8 67.0,234.8" fill="#fde6cc" stroke="#3c2612" stroke-width="0.9" stroke-linejoin="round"/>
<polygon points="62.0,232.4 67.0,234.8 67.0,238.6 62.0,236.2" fill="#fbd9c0" stroke="#3c2612" stroke-width="0.9" stroke-linejoin="round"/>
<polygon points="67.0,234.8 72.8,231.8 72.8,235.6 67.0,238.6" fill="#f2c8a4" stroke="#3c2612" stroke-width="0.9" stroke-linejoin="round"/>
<path d="M61.9,236.0 L61.9,232.2 L68.6,229.2" fill="none" stroke="#ff18e8" stroke-width="2" stroke-linejoin="round"/>
<rect x="60.5" y="241.5" width="12.0" height="12.0" fill="#fff" stroke="#a4a4a4" stroke-width="1"/>
<path d="M61.5,252.5 v-10 h10" fill="none" stroke="#6e6e6e" stroke-width="1"/>
<path d="M61.5,252.5 h10 v-10" fill="none" stroke="#e4e4e4" stroke-width="1"/>
<path d="M63.2,247.0 l2.3,2.4 l4.2,-4.6" fill="none" stroke="#000" stroke-width="2"/>
<polygon points="78.3,242.8 83.5,240.3 89.9,242.3 84.4,244.6" fill="#62d462" stroke="#0d4e0d" stroke-width="1" stroke-linejoin="round"/>
<polygon points="78.3,242.8 84.4,244.6 84.4,253.7 78.3,251.0" fill="#aaf2aa" stroke="#0d4e0d" stroke-width="1" stroke-linejoin="round"/>
<polygon points="84.4,244.6 89.9,242.3 89.9,251.3 84.4,253.7" fill="#40b440" stroke="#0d4e0d" stroke-width="1" stroke-linejoin="round"/>
<rect x="60.5" y="257.5" width="12.0" height="12.0" fill="#fff" stroke="#a4a4a4" stroke-width="1"/>
<path d="M61.5,268.5 v-10 h10" fill="none" stroke="#6e6e6e" stroke-width="1"/>
<path d="M61.5,268.5 h10 v-10" fill="none" stroke="#e4e4e4" stroke-width="1"/>
<path d="M63.2,263.0 l2.3,2.4 l4.2,-4.6" fill="none" stroke="#000" stroke-width="2"/>
<polygon points="78.3,258.8 83.5,256.3 89.9,258.3 84.4,260.6" fill="#62d462" stroke="#0d4e0d" stroke-width="1" stroke-linejoin="round"/>
<polygon points="78.3,258.8 84.4,260.6 84.4,269.7 78.3,267.0" fill="#aaf2aa" stroke="#0d4e0d" stroke-width="1" stroke-linejoin="round"/>
<polygon points="84.4,260.6 89.9,258.3 89.9,267.3 84.4,269.7" fill="#40b440" stroke="#0d4e0d" stroke-width="1" stroke-linejoin="round"/>
<rect x="60.5" y="273.5" width="12.0" height="12.0" fill="#fff" stroke="#a4a4a4" stroke-width="1"/>
<path d="M61.5,284.5 v-10 h10" fill="none" stroke="#6e6e6e" stroke-width="1"/>
<path d="M61.5,284.5 h10 v-10" fill="none" stroke="#e4e4e4" stroke-width="1"/>
<path d="M63.2,279.0 l2.3,2.4 l4.2,-4.6" fill="none" stroke="#000" stroke-width="2"/>
<polygon points="78.3,274.8 83.5,272.3 89.9,274.3 84.4,276.6" fill="#62d462" stroke="#0d4e0d" stroke-width="1" stroke-linejoin="round"/>
<polygon points="78.3,274.8 84.4,276.6 84.4,285.7 78.3,283.0" fill="#aaf2aa" stroke="#0d4e0d" stroke-width="1" stroke-linejoin="round"/>
<polygon points="84.4,276.6 89.9,274.3 89.9,283.3 84.4,285.7" fill="#40b440" stroke="#0d4e0d" stroke-width="1" stroke-linejoin="round"/>
<rect x="60.5" y="289.5" width="12.0" height="12.0" fill="#fff" stroke="#a4a4a4" stroke-width="1"/>
<path d="M61.5,300.5 v-10 h10" fill="none" stroke="#6e6e6e" stroke-width="1"/>
<path d="M61.5,300.5 h10 v-10" fill="none" stroke="#e4e4e4" stroke-width="1"/>
<path d="M63.2,295.0 l2.3,2.4 l4.2,-4.6" fill="none" stroke="#000" stroke-width="2"/>
<polygon points="78.3,290.8 83.5,288.3 89.9,290.3 84.4,292.6" fill="#62d462" stroke="#0d4e0d" stroke-width="1" stroke-linejoin="round"/>
<polygon points="78.3,290.8 84.4,292.6 84.4,301.7 78.3,299.0" fill="#aaf2aa" stroke="#0d4e0d" stroke-width="1" stroke-linejoin="round"/>
<polygon points="84.4,292.6 89.9,290.3 89.9,299.3 84.4,301.7" fill="#40b440" stroke="#0d4e0d" stroke-width="1" stroke-linejoin="round"/>
<rect x="60.5" y="305.5" width="12.0" height="12.0" fill="#fff" stroke="#a4a4a4" stroke-width="1"/>
<path d="M61.5,316.5 v-10 h10" fill="none" stroke="#6e6e6e" stroke-width="1"/>
<path d="M61.5,316.5 h10 v-10" fill="none" stroke="#e4e4e4" stroke-width="1"/>
<path d="M63.2,311.0 l2.3,2.4 l4.2,-4.6" fill="none" stroke="#000" stroke-width="2"/>
<polygon points="78.3,306.8 83.5,304.3 89.9,306.3 84.4,308.6" fill="#62d462" stroke="#0d4e0d" stroke-width="1" stroke-linejoin="round"/>
<polygon points="78.3,306.8 84.4,308.6 84.4,317.7 78.3,315.0" fill="#aaf2aa" stroke="#0d4e0d" stroke-width="1" stroke-linejoin="round"/>
<polygon points="84.4,308.6 89.9,306.3 89.9,315.3 84.4,317.7" fill="#40b440" stroke="#0d4e0d" stroke-width="1" stroke-linejoin="round"/>
<line x1="13.4" y1="446.6" x2="18.4" y2="451.4" stroke="#8a5a2c" stroke-width="3" stroke-linecap="round"/>
<line x1="13.6" y1="446.8" x2="18.0" y2="451.0" stroke="#c48a4c" stroke-width="1.3" stroke-linecap="round"/>
<circle cx="10.4" cy="443.4" r="4.6" fill="#cfe6f4" stroke="#8a9aa6" stroke-width="1.2"/>
<circle cx="9.4" cy="442.4" r="2.2" fill="#eef8fd"/>
<path d="M11.2,494.2 l2.6,2.8 l5,-6" fill="none" stroke="#fff" stroke-width="1.6"/>
<path d="M5.6,763.6 l3.9,4.2 l3.9,-4.2" fill="none" stroke="#3a3a3a" stroke-width="1.6"/>
<path d="M247.5,934 V930.8 H254.4 L258,934" fill="#f2f2f6" stroke="#3a5a8a" stroke-width="1"/>
</svg>

<svg width="1807" height="934" viewBox="0 0 1807 934">
<g shape-rendering="geometricPrecision">
<polygon points="1003.1,225.3 1307.7,207.6 1536.1,267.7 1231.7,285.3" fill="#979e96"/>
<polygon points="1003.1,225.3 1231.7,285.3 1229.4,323.8 1000.8,263.8" fill="#adb4ac"/>
<polygon points="1231.7,285.3 1536.1,267.7 1533.9,306.2 1229.4,323.8" fill="#9ca39c"/>
<polygon points="1000.8,263.1 1229.5,323.1 1227.2,361.6 998.5,301.6" fill="#9dc39d"/>
<polygon points="1229.5,323.1 1533.9,305.4 1531.7,343.9 1227.2,361.6" fill="#8faf8f"/>
<polygon points="998.6,300.8 1227.3,360.9 1225.0,399.4 996.3,339.4" fill="#adb4ac"/>
<polygon points="1227.3,360.9 1531.7,343.1 1529.5,381.6 1225.0,399.4" fill="#9ca39c"/>
<polygon points="996.3,338.6 1225.1,398.7 1222.8,437.2 994.0,377.1" fill="#9dc39d"/>
<polygon points="1225.1,398.7 1529.5,380.8 1527.3,419.3 1222.8,437.2" fill="#8faf8f"/>
<polygon points="994.1,376.4 1222.9,436.5 1220.6,475.0 991.8,414.9" fill="#adb4ac"/>
<polygon points="1222.9,436.5 1527.3,418.5 1525.1,457.0 1220.6,475.0" fill="#9ca39c"/>
<polygon points="991.8,414.1 1220.7,474.2 1218.4,512.8 989.5,452.7" fill="#9dc39d"/>
<polygon points="1220.7,474.2 1525.1,456.2 1522.9,494.7 1218.4,512.8" fill="#8faf8f"/>
<polygon points="989.5,451.9 1218.4,512.0 1216.2,550.6 987.2,490.4" fill="#adb4ac"/>
<polygon points="1218.4,512.0 1522.9,494.0 1520.7,532.4 1216.2,550.6" fill="#9ca39c"/>
<polygon points="987.3,489.7 1216.2,549.8 1214.0,588.4 985.0,528.2" fill="#9dc39d"/>
<polygon points="1216.2,549.8 1520.7,531.7 1518.5,570.1 1214.0,588.4" fill="#8faf8f"/>
<polygon points="985.0,527.5 1214.0,587.6 1211.8,626.2 982.7,566.0" fill="#adb4ac"/>
<polygon points="1214.0,587.6 1518.5,569.4 1516.3,607.8 1211.8,626.2" fill="#9ca39c"/>
<polygon points="982.8,565.2 1211.8,625.4 1209.6,663.2 980.5,603.0" fill="#9dc39d"/>
<polygon points="1211.8,625.4 1516.3,607.1 1514.1,644.8 1209.6,663.2" fill="#8faf8f"/>
<path d="M1003.1,225.3 L1231.7,285.3 L1536.1,267.7 M1231.7,285.3 L1209.6,663.2" fill="none" stroke="#e4e7e4" stroke-width="0.9" stroke-linecap="round"/>
</g>
<line x1="980.6" y1="603.2" x2="958.0" y2="603.8" stroke="#90aaf0" stroke-width="2.6"/>
<polygon points="941.4,605.2 958.2,601.2 958.6,607.4" fill="#3a6af0"/>
<ellipse cx="958.4" cy="604.3" rx="1.2" ry="3.1" fill="#3060e0"/>
<line x1="980.6" y1="603.2" x2="996.5" y2="607.6" stroke="#f06868" stroke-width="2.6"/>
<path d="M1010.6,610.6 L996.6,610.8 Q994.6,608 996.2,605.2 Q998.6,604 1000.4,605.4Z" fill="#ff0808"/>
<line x1="980.6" y1="603.2" x2="983.0" y2="573.0" stroke="#52b452" stroke-width="2.8"/>
<polygon points="983.6,554.6 986.9,573.2 979.9,573.2" fill="#0c960c"/>
<ellipse cx="983.4" cy="573.2" rx="3.5" ry="1" fill="#0a8a0a"/>
<rect x="979.2" y="601.6" width="2.8" height="3.0" fill="#8c8c8c"/>
<text x="980.2" y="547.4" font-family="Liberation Sans, sans-serif" font-size="10.5" font-weight="normal" fill="#3c9a3c" textLength="7.6" lengthAdjust="spacingAndGlyphs">Y</text>
<text x="929.3" y="609.6" font-family="Liberation Sans, sans-serif" font-size="10.5" font-weight="normal" fill="#5a5aee" textLength="7.2" lengthAdjust="spacingAndGlyphs">Z</text>
<text x="1013.1" y="616.2" font-family="Liberation Sans, sans-serif" font-size="10.5" font-weight="normal" fill="#f05a5a" textLength="7.4" lengthAdjust="spacingAndGlyphs">X</text>
<polygon points="287.0,854.2 298.2,856.0 297.2,877.4 286.3,873.4" fill="#e2f1fc" stroke="#b9c3e2" stroke-width="0.8" stroke-linejoin="round"/>
<polygon points="298.2,856.0 314.2,856.2 312.8,875.4 297.2,877.4" fill="#d0e0f9" stroke="#b9c3e2" stroke-width="0.8" stroke-linejoin="round"/>
<polygon points="287.0,854.2 301.6,853.4 314.2,856.2 298.2,856.0" fill="#d8e6fa" stroke="#b9c3e2" stroke-width="0.6" stroke-linejoin="round"/>
<path d="M296.6,855.8 A4.2,4.6 0 0 1 305,855.9Z" fill="#0a8a1a"/>
<ellipse cx="291.4" cy="865.4" rx="3.4" ry="4.4" fill="#0a0aff"/>
<ellipse cx="306.5" cy="866.4" rx="3.7" ry="4.2" fill="#ff0a0a"/>
<line x1="301.1" y1="842.0" x2="301.1" y2="848.0" stroke="#0a8a0a" stroke-width="2.4"/>
<polygon points="301.4,832.4 304.6,843.0 298.0,843.0" fill="#0a8a0a"/>
<line x1="280.0" y1="866.0" x2="285.4" y2="866.0" stroke="#4a4af0" stroke-width="2.2"/>
<polygon points="269.0,866.6 281.0,862.6 281.0,869.6" fill="#4a4af0"/>
<path d="M310.6,866.8 L314.4,865.8 L325.2,871.4 L314.6,872.8Z" fill="#ffc0c0"/>
<text x="298.6" y="829.0" font-family="Liberation Sans, sans-serif" font-size="10.5" font-weight="bold" fill="#0a8a0a" textLength="7.2" lengthAdjust="spacingAndGlyphs">Y</text>
<text x="257.6" y="871.0" font-family="Liberation Sans, sans-serif" font-size="10.5" font-weight="bold" fill="#1010ff" textLength="7" lengthAdjust="spacingAndGlyphs">Z</text>
<text x="328.6" y="877.2" font-family="Liberation Sans, sans-serif" font-size="10.5" font-weight="bold" fill="#ff1010" textLength="7" lengthAdjust="spacingAndGlyphs">X</text>
<rect x="256.6" y="126.6" width="46.8" height="46.8" rx="8" fill="#fff" stroke="#787878" stroke-width="1.3"/>
<rect x="311.5" y="126.5" width="31" height="31" rx="5.5" fill="#fff" stroke="#8a8a8a" stroke-width="1"/>
<rect x="255.5" y="189.5" width="31" height="31" rx="5.5" fill="#fff" stroke="#8a8a8a" stroke-width="1"/>
<rect x="255.5" y="252.5" width="31" height="31" rx="5.5" fill="#fdfdfd" stroke="#e2e2e2" stroke-width="1"/>
<defs><linearGradient id="gb" x1="0" y1="0" x2="1" y2="1"><stop offset="0" stop-color="#c89a5c"/><stop offset="0.6" stop-color="#9a6c34"/><stop offset="1" stop-color="#7a5024"/></linearGradient><linearGradient id="gg2" x1="0" y1="0" x2="1" y2="1"><stop offset="0" stop-color="#d8d8d8"/><stop offset="0.5" stop-color="#9a9a9a"/><stop offset="1" stop-color="#6a6a6a"/></linearGradient><linearGradient id="gg" x1="0" y1="0" x2="1" y2="0"><stop offset="0" stop-color="#6e6e6e"/><stop offset="1" stop-color="#b4b4b4"/></linearGradient></defs>
<path d="M269.3,132.5 L269.3,160.1 L276.7,153.7 L283.1,167.8 L290.8,164.3 L283.4,150.8 L292.1,148.3Z" fill="#ffb050" stroke="#ffb458" stroke-width="2.6" stroke-linejoin="round"/>
<path d="M269.3,132.5 L269.3,160.1 L276.7,153.7 L283.1,167.8 L290.8,164.3 L283.4,150.8 L292.1,148.3Z" fill="url(#gb)" stroke="#2c1c0a" stroke-width="1.0" stroke-linejoin="round"/>
<path d="M272.3,139.5 V147.5" stroke="#e8b878" stroke-width="1.4" fill="none" opacity="0.8"/>
<path d="M315.2,130.6 L315.2,143.1 L318.4,140.2 L321.3,146.0 L323.9,144.7 L321.0,138.9 L324.8,137.7Z" fill="url(#gg2)" stroke="#565656" stroke-width="0.8" stroke-linejoin="round"/>
<polygon points="319.0,149.5 327.1,145.4 339.0,149.2 330.6,153.4" fill="#e2aa72" stroke="#b4865a" stroke-width="0.6" stroke-linejoin="round" stroke-dasharray="1.6 0.8"/>
<path d="M259.1,191.9 L259.1,207.8 L263.6,204.4 L267.0,212.4 L271.0,210.7 L267.6,202.7 L273.3,201.0Z" fill="url(#gg2)" stroke="#4c4c4c" stroke-width="0.9" stroke-linejoin="round"/>
<path d="M261.2,195.6 V200.4" stroke="#f0f0f0" stroke-width="1" fill="none" opacity="0.8"/>
<line x1="271.9" y1="207.2" x2="282.6" y2="217.2" stroke="#d41a22" stroke-width="2.3" stroke-linecap="round"/>
<line x1="282.2" y1="207.4" x2="271.8" y2="217.3" stroke="#d41a22" stroke-width="2.3" stroke-linecap="round"/>
<path d="M257.9,270.6 Q263.4,270.6 267.8,275.4 Q273.6,262 282.2,255.4 L283.6,257.8 Q275.4,268 270.6,280.6 Q268.4,282.4 266,280.8 Q263.2,274.6 257.9,270.6Z" fill="#bbe4c2"/>
<path d="M1804.7,135.2 L1807.6,127.6" stroke="#161616" stroke-width="1.7" fill="none"/>
<line x1="1801.0" y1="161.5" x2="1807.0" y2="161.5" stroke="#3a3a3a" stroke-width="1"/>
<path d="M1801.5,179.2 L1805.6,168.8 M1803.4,175.4 H1807" stroke="#444" stroke-width="1.2" fill="none"/>
</svg>
<span class="t" style="left:8.23px;top:38px;transform:scaleX(0.9295);">Identify</span>
<span class="t" style="left:7.75px;top:51px;transform:scaleX(0.9058);">Objects</span>
<span class="t" style="left:57.64px;top:38px;transform:scaleX(0.9206);">Icepak</span>
<span class="t" style="left:54.56px;top:51px;transform:scaleX(0.9321);">Simplify</span>
<span class="t" style="left:120.93px;top:5px;transform:scaleX(0.9410);">Opening</span>
<span class="t" style="left:120.97px;top:27px;transform:scaleX(0.9310);">Fan</span>
<span class="t" style="left:120.84px;top:49px;transform:scaleX(0.9895);">Grille</span>
<span class="t" style="left:188.96px;top:5px;transform:scaleX(0.9422);">Enclosure</span>
<span class="t" style="left:188.58px;top:28px;transform:scaleX(0.9042);">Show</span>
<span class="t" style="left:106.93px;top:68px;transform:scaleX(0.9323);">Icepak</span>
<span class="t" style="left:252.52px;top:37px;transform:scaleX(0.9592);">Overlap</span>
<span class="t" style="left:256.00px;top:50px;transform:scaleX(0.9079);">Bodies</span>
<span class="t" style="left:305.62px;top:37px;transform:scaleX(0.9740);">Split</span>
<span class="t" style="left:301.91px;top:50px;transform:scaleX(0.8967);">Edges</span>
<span class="t" style="left:359.99px;top:4px;transform:scaleX(0.9162);">Extra Edges</span>
<span class="t" style="left:360.75px;top:27px;transform:scaleX(0.9442);">Simplify</span>
<span class="t" style="left:360.77px;top:50px;transform:scaleX(0.9155);">Small Faces</span>
<span class="t" style="left:452.81px;top:28px;transform:scaleX(0.9225);color:#b9b9b9;">Zoom to Fit</span>
<span class="t" style="left:452.57px;top:48px;transform:scaleX(0.9525);">Clip Volume</span>
<span class="t" style="left:466.66px;top:68px;transform:scaleX(0.9272);">Sharing</span>
<span class="t" style="left:527.45px;top:44px;transform:scaleX(0.9399);">Share</span>
<span class="t" style="left:568.01px;top:44px;transform:scaleX(0.9288);">Unshare</span>
<span class="t" style="left:620.97px;top:37px;transform:scaleX(0.9366);">Force</span>
<span class="t" style="left:620.86px;top:50px;transform:scaleX(0.9268);">Share</span>
<span class="t" style="left:747.86px;top:4px;transform:scaleX(0.9439);">Faces</span>
<span class="t" style="left:747.91px;top:27px;transform:scaleX(0.8967);">Edges</span>
<span class="t" style="left:748.04px;top:50px;transform:scaleX(0.9436);">Vertices</span>
<span class="t" style="left:744.75px;top:68px;transform:scaleX(0.9353);">Shared Display</span>
<span class="t" style="left:865.11px;top:5px;transform:scaleX(0.8927);">Beams</span>
<span class="t" style="left:865.12px;top:28px;transform:scaleX(0.8786);">Edges</span>
<span class="t" style="left:863.97px;top:68px;transform:scaleX(0.9347);">Free Display</span>
<span class="t" style="left:969.64px;top:37px;transform:scaleX(0.9238);color:#a4a4ac;">Update</span>
<span class="t" style="left:959.21px;top:50px;transform:scaleX(0.9011);color:#a4a4ac;">Parameters</span>
<span class="t" style="left:1028.39px;top:37px;transform:scaleX(0.9359);">2020</span>
<span class="t" style="left:1033.88px;top:50px;transform:scaleX(0.9286);">R2</span>
<span class="t" style="left:1065.78px;top:37px;transform:scaleX(0.9216);">Mechanical 2020</span>
<span class="t" style="left:1100.65px;top:50px;transform:scaleX(0.9567);">R2</span>
<span class="t" style="left:1158.78px;top:37px;transform:scaleX(0.9236);">Fluent 2020</span>
<span class="t" style="left:1181.55px;top:50px;transform:scaleX(0.9637);">R2</span>
<span class="t" style="left:1048.04px;top:68px;transform:scaleX(0.9193);">ANSYS Transfer</span>
<span class="t" style="left:2.54px;top:92px;transform:scaleX(0.9484);">Structure</span>
<span class="t" style="left:59.26px;top:113px;transform:scaleX(0.9286);">heat_exchanger*</span>
<span class="t" style="left:79.16px;top:129px;transform:scaleX(0.9063);">Water</span>
<span class="t" style="left:98.26px;top:145px;transform:scaleX(0.8957);">Water 1</span>
<span class="t" style="left:98.26px;top:161px;transform:scaleX(0.9060);">Water 2</span>
<span class="t" style="left:98.26px;top:177px;transform:scaleX(0.9054);">Water 3</span>
<span class="t" style="left:98.26px;top:193px;transform:scaleX(0.9015);">Water 4</span>
<span class="t" style="left:98.26px;top:209px;transform:scaleX(0.9054);">Water 5</span>
<span class="t" style="left:78.69px;top:225px;transform:scaleX(1.1422);font-weight:bold;">Oil</span>
<span class="t" style="left:97.81px;top:241px;transform:scaleX(0.9645);">Oil 1</span>
<span class="t" style="left:97.80px;top:257px;transform:scaleX(0.9827);">Oil 2</span>
<span class="t" style="left:97.80px;top:273px;transform:scaleX(0.9814);">Oil 3</span>
<span class="t" style="left:97.81px;top:289px;transform:scaleX(0.9741);">Oil 4</span>
<span class="t" style="left:97.80px;top:305px;transform:scaleX(0.9814);">Oil 5</span>
<span class="t" style="left:5.63px;top:389px;transform:scaleX(0.9416);color:#4070a4;">Structure</span>
<span class="t" style="left:57.98px;top:389px;transform:scaleX(0.9225);">Layers</span>
<span class="t" style="left:98.45px;top:389px;transform:scaleX(0.9393);">Selection</span>
<span class="t" style="left:150.68px;top:389px;transform:scaleX(0.9322);">Groups</span>
<span class="t" style="left:195.94px;top:389px;transform:scaleX(0.9302);">Views</span>
<span class="t" style="left:2.63px;top:416px;transform:scaleX(0.9309);">Options - Share Topology</span>
<span class="t" style="left:24.66px;top:438px;transform:scaleX(0.9196);">Search Options</span>
<span class="t" style="left:9.79px;top:466px;transform:scaleX(0.9195);">Coincidence tolerance:</span>
<span class="t" style="left:132.50px;top:466px;transform:scaleX(0.9317);">0.0002m</span>
<span class="t" style="left:27.99px;top:487px;transform:scaleX(0.9138);">Preserve instances</span>
<span class="t" style="left:27.99px;top:507px;transform:scaleX(0.9146);">Preview connectivity by color</span>
<span class="t" style="left:3.04px;top:740px;transform:scaleX(0.9178);">Appearance</span>
<span class="t" style="left:25.00px;top:759px;transform:scaleX(0.9059);">Background</span>
<span class="t" style="left:108.04px;top:759px;transform:scaleX(0.8533);">Color</span>
<span class="t" style="left:45.14px;top:775px;transform:scaleX(0.8533);">Color</span>
<span class="t" style="left:135.65px;top:775px;transform:scaleX(0.8743);">White</span>
<span class="t" style="left:45.74px;top:791px;transform:scaleX(0.8631);">Environment</span>
<span class="t" style="left:108.72px;top:791px;transform:scaleX(0.8777);">Default</span>
<span class="t" style="left:252.90px;top:101px;transform:scaleX(0.8097);color:#787878;font-size:14px;letter-spacing:0.96px;will-change:transform;">There is no coincident topology in the model</span>
</body></html>
